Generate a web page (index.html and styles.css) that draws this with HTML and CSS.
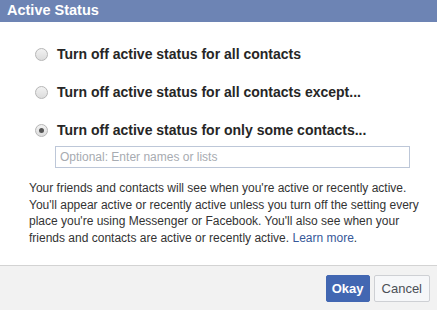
FILE: index.html
```html
<!DOCTYPE html>
<html lang="en">
  <head>
    <meta charset="UTF-8" />
    <title>Active Status</title>
    <link rel="stylesheet" href="styles.css">
  </head>
  <body>
    <div class="dialog">
      <div class="dialog-header">Active Status</div>

      <div class="dialog-body">
        <label class="option">
          <span class="radio"></span>
          Turn off active status for all contacts
        </label>
        <label class="option">
          <span class="radio"></span>
          Turn off active status for all contacts except...
        </label>
        <label class="option option-last">
          <span class="radio checked"></span>
          Turn off active status for only some contacts...
        </label>
        <input class="names" type="text" placeholder="Optional: Enter names or lists" />

        <p class="info">
          Your friends and contacts will see when you're active or recently active.<br>
          You'll appear active or recently active unless you turn off the setting every<br>
          place you're using Messenger or Facebook. You'll also see when your<br>
          friends and contacts are active or recently active. <a href="#">Learn more</a>.
        </p>
      </div>

      <div class="dialog-footer">
        <button class="btn btn-primary">Okay</button>
        <button class="btn">Cancel</button>
      </div>
    </div>
  </body>
</html>
```

FILE: styles.css
```css
body {
  margin: 0;
  font-family: "Liberation Sans", Arial, sans-serif;
  background: #fff;
  color: #1d2129;
}

.dialog {
  width: 437px;
  height: 310px;
  display: flex;
  flex-direction: column;
}

.dialog-header {
  height: 22px;
  line-height: 21px;
  padding-left: 7px;
  background-color: #6d84b4;
  color: #fff;
  font-size: 14.5px;
  font-weight: bold;
}

.dialog-body {
  flex: 1;
  padding: 24px 0 0 29px;
}

.option {
  display: flex;
  align-items: center;
  gap: 9px;
  margin-left: 6px;
  height: 16px;
  margin-bottom: 22px;
  font-size: 14px;
  font-weight: bold;
  color: #262626;
}

.option-last {
  margin-bottom: 8px;
}

.radio {
  width: 11px;
  height: 11px;
  border: 1px solid #b6b6b6;
  border-radius: 50%;
  background: linear-gradient(#f2f2f2, #dcdcdc);
  position: relative;
}

.radio.checked::after {
  content: "";
  position: absolute;
  left: 3px;
  top: 3px;
  width: 5px;
  height: 5px;
  border-radius: 50%;
  background: #555;
}

.names {
  display: block;
  box-sizing: border-box;
  width: 355px;
  height: 22px;
  margin-left: 26px;
  padding: 0 4px;
  border: 1px solid #bdc7d8;
  font-family: inherit;
  font-size: 12px;
  color: #1d2129;
  outline: none;
}

.names::placeholder {
  color: #a7abb1;
}

.info {
  margin: 12px 0 0 0;
  font-size: 12px;
  line-height: 16.5px;
  color: #333;
  white-space: nowrap;
}

.info a {
  color: #365899;
  text-decoration: none;
}

.dialog-footer {
  height: 43px;
  border-top: 1px solid #d3d3d3;
  background-color: #f2f2f2;
  display: flex;
  justify-content: flex-end;
  align-items: center;
  gap: 4px;
  padding-right: 7px;
  padding-top: 1px;
}

.btn {
  height: 27px;
  padding: 0 7px;
  border: 1px solid #ced0d4;
  border-radius: 2px;
  background-color: #f6f7f9;
  color: #4b4f56;
  font-family: inherit;
  font-size: 13px;
}

.btn-primary {
  background-color: #4267b2;
  border-color: #4267b2;
  color: #fff;
  font-weight: bold;
  padding: 0 5px;
}
```
